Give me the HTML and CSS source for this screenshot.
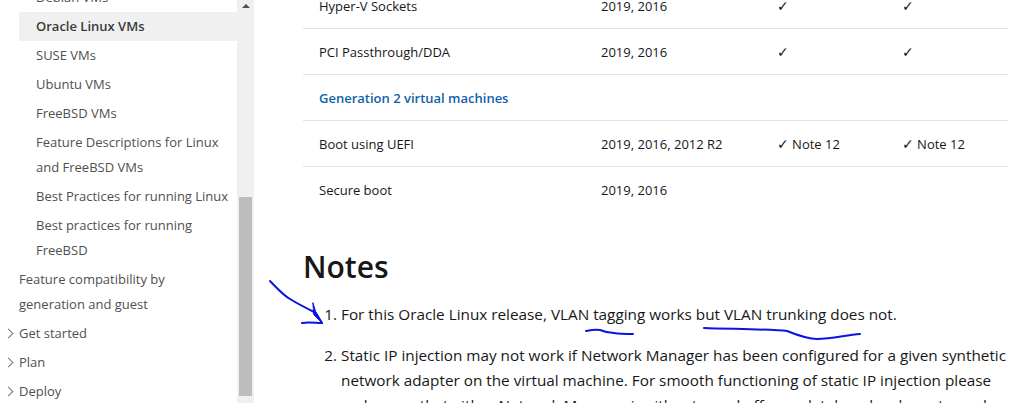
FILE: index.html
```html
<!DOCTYPE html>
<html lang="en">
<head>
<meta charset="utf-8">
<title>Oracle Linux VMs</title>
<link rel="stylesheet" href="styles.css">
</head>
<body>
<div class="page">
  <aside class="side">
    <nav class="toc">
      <a class="item sub clip">Debian VMs</a>
      <a class="item sub active">Oracle Linux VMs</a>
      <a class="item sub">SUSE VMs</a>
      <a class="item sub">Ubuntu VMs</a>
      <a class="item sub">FreeBSD VMs</a>
      <a class="item sub">Feature Descriptions for Linux and FreeBSD VMs</a>
      <a class="item sub">Best Practices for running Linux</a>
      <a class="item sub">Best practices for running FreeBSD</a>
      <a class="item top">Feature compatibility by generation and guest</a>
      <a class="item top exp">Get started</a>
      <a class="item top exp">Plan</a>
      <a class="item top exp">Deploy</a>
    </nav>
    <div class="scrollbar">
      <div class="arrow"></div>
      <div class="thumb"></div>
    </div>
  </aside>
  <main class="main">
    <table class="grid">
      <colgroup><col class="c1"><col class="c2"><col class="c3"><col class="c4"></colgroup>
      <tbody>
        <tr><td>Hyper-V Sockets</td><td>2019, 2016</td><td><span class="check">✓</span></td><td><span class="check">✓</span></td></tr>
        <tr><td>PCI Passthrough/DDA</td><td>2019, 2016</td><td><span class="check">✓</span></td><td><span class="check">✓</span></td></tr>
        <tr><td class="gen" colspan="4">Generation 2 virtual machines</td></tr>
        <tr><td>Boot using UEFI</td><td>2019, 2016, 2012 R2</td><td><span class="check">✓</span> Note 12</td><td><span class="check">✓</span> Note 12</td></tr>
        <tr class="last"><td>Secure boot</td><td>2019, 2016</td><td></td><td></td></tr>
      </tbody>
    </table>
    <h2 class="heading">Notes</h2>
    <ol class="notes">
      <li>For this Oracle Linux release, VLAN tagging works but VLAN trunking does not.</li>
      <li>Static IP injection may not work if Network Manager has been configured for a given synthetic network adapter on the virtual machine. For smooth functioning of static IP injection please make sure that either Network Manager is either turned off completely or has been turned off</li>
    </ol>
  </main>
  <svg class="ink" width="1030" height="403" viewBox="0 0 1030 403" aria-hidden="true">
    <path d="M270 281 C276 287 283 295 290 299 C298 304 308 309 316 313 L322 323"/>
    <path d="M313 303 L316 313 L322 323 L314 315 Z" class="fill"/>
    <path d="M302 323 C308 322 316 323 322 323"/>
    <path d="M586 331 C591 330 596 329 600 330 C605 332 610 333 614 333 C620 334 627 334 633 334"/>
    <path d="M704 328 C725 329 770 329 787 331 C797 335 808 339 817 339 C832 339 846 335 860 334"/>
  </svg>
</div>
</body>
</html>
```
FILE: styles.css
```css
html, body { margin: 0; padding: 0; background: #fff; }
body { font-family: "Open Sans", "Noto Sans", "Liberation Sans", sans-serif; color: #171717; }
.page { position: relative; display: flex; width: 1030px; height: 403px; overflow: hidden; }

.side { display: flex; flex: 0 0 254px; height: 403px; }
.toc { flex: 0 0 237px; margin-top: -17px; display: flex; flex-direction: column; font-size: 13px; color: #505050; }
.item { display: block; line-height: 25px; padding-top: 2px; padding-bottom: 2px; }
.sub { margin-left: 19px; padding-left: 17px; }
.top { padding-left: 19px; padding-right: 8px; position: relative; }
.active { background: #f0f0f0; color: #3a3a3a; font-weight: 600; }
.exp::before { content: ""; position: absolute; left: 5px; top: 11px; width: 6px; height: 6px; border-top: 1px solid #777; border-right: 1px solid #777; transform: rotate(45deg); }

.scrollbar { flex: 0 0 17px; background: #f0f0f0; display: flex; flex-direction: column; align-items: center; box-sizing: border-box; padding: 4px 2px 7px; justify-content: space-between; }
.arrow { width: 0; height: 0; border-left: 4px solid transparent; border-right: 4px solid transparent; border-bottom: 4px solid #505050; }
.thumb { width: 13px; height: 199px; background: #bdbdbd; }

.main { flex: 1; padding-left: 49px; padding-right: 22px; min-width: 0; }
.grid { width: 705px; border-collapse: collapse; table-layout: fixed; font-size: 13px; margin-top: -17px; }
.c1 { width: 282px; } .c2 { width: 176px; } .c3 { width: 125px; }
.grid td { height: 45px; padding: 0 0 0 16px; border-bottom: 1px solid #e3e3e3; vertical-align: middle; }
.grid .last td { border-bottom: 0; }
.gen { color: #0f62ab; font-weight: 600; }
.check { font-family: "DejaVu Sans", sans-serif; font-size: 14px; font-weight: 700; line-height: 1; }

.heading { margin: 35px 0 0; font-size: 30px; line-height: 40px; font-weight: 600; color: #171717; }
.notes { margin: 15px 0 0; padding-left: 38px; font-size: 15.3px; line-height: 25px; color: #171717; }
.notes li + li { margin-top: 16px; }

.ink { position: absolute; left: 0; top: 0; fill: none; stroke: #0a14e0; stroke-width: 2; stroke-linecap: round; stroke-linejoin: round; pointer-events: none; }
.ink .fill { fill: #0a14e0; stroke-width: 1; }
```
